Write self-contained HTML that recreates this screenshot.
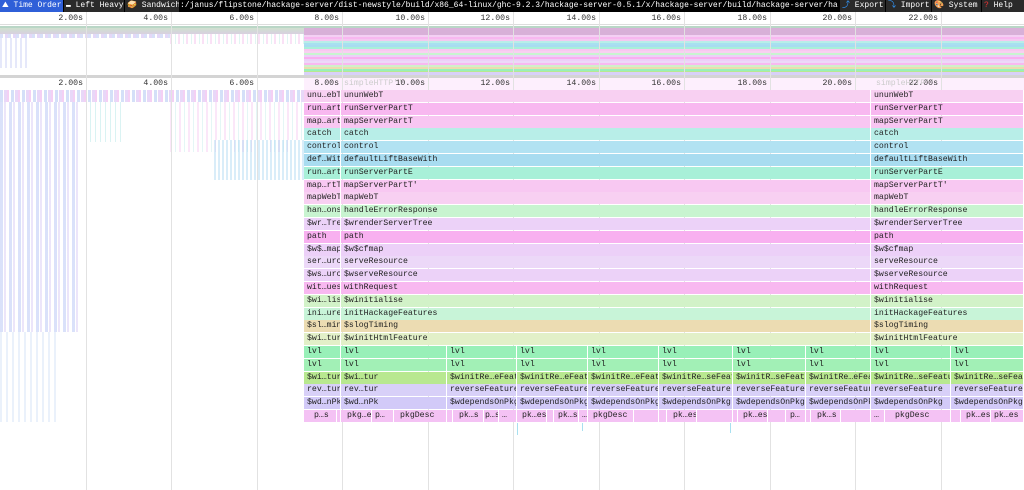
<!DOCTYPE html>
<html><head><meta charset="utf-8"><style>
*{margin:0;padding:0;box-sizing:border-box}
body{width:1024px;height:490px;background:#fff;position:relative;overflow:hidden;font-family:"Liberation Mono","DejaVu Sans Mono",monospace;font-size:8.2px;color:#222}
.a{position:absolute}
.top{left:0;top:0;width:1024px;height:12px;background:#000;color:#fff;font-size:8px;line-height:12px;white-space:nowrap;overflow:hidden}
.btn{position:absolute;top:0;height:12px;background:#2a2a2a;padding-left:2px;color:#fff;overflow:hidden;white-space:nowrap}
.g{position:absolute;width:1px;background:#e2e2e2}
.lab{position:absolute;font-size:8.2px;line-height:12px;color:#333;text-align:right;width:60px}
.s{position:absolute;height:12px;line-height:12px;padding-left:3px;overflow:hidden;white-space:nowrap;border-right:1px solid #fff;color:#222}
</style></head><body>
<div class="a top">
<div class="btn" style="left:0;width:63px;background:#2f5fd8">⛰ Time Order</div>
<div class="btn" style="left:64px;width:60px">▬ Left Heavy</div>
<div class="btn" style="left:125px;width:54px">🥪 Sandwich</div>
<div class="a" style="left:180px;top:0;width:658px;overflow:hidden">:/janus/flipstone/hackage-server/dist-newstyle/build/x86_64-linux/ghc-9.2.3/hackage-server-0.5.1/x/hackage-server/build/hackage-server/hackage-s</div>
<div class="btn" style="left:840px;width:45px"><span style="color:#39f">⤴</span> Export</div>
<div class="btn" style="left:886px;width:45px"><span style="color:#39f">⤵</span> Import</div>
<div class="btn" style="left:932px;width:49px">🎨 System</div>
<div class="btn" style="left:982px;width:42px"><span style="color:#e33">?</span> Help</div>
</div>
<!-- minimap -->
<div class="a" style="left:0;top:12px;width:1024px;height:13px;background:#fff;border-bottom:1px solid #ddd"></div>
<div class="a" style="left:0;top:26px;width:1024px;height:2px;background:#b9d6c6"></div>
<div class="a" style="left:0;top:28px;width:304px;height:6px;background:linear-gradient(#cfe0cf,#d8d0e0)"></div>
<div class="a" style="left:0;top:34px;width:170px;height:4px;background:repeating-linear-gradient(90deg,#d8e0f8 0 3px,#fff 3px 5px,#e4d8f8 5px 8px)"></div>
<div class="a" style="left:0;top:38px;width:30px;height:30px;background:repeating-linear-gradient(90deg,rgba(170,180,240,.3) 0 2px,#fff 2px 5px)"></div>
<div class="a" style="left:170px;top:34px;width:134px;height:10px;background:repeating-linear-gradient(90deg,rgba(240,170,230,.35) 0 2px,#fff 2px 5px,rgba(170,230,220,.35) 5px 6px,#fff 6px 8px)"></div>
<div class="a" style="left:304px;top:28px;width:720px;height:47px;background:linear-gradient(#d8b0d8 0 7px,#f4d0f4 7px 9px,#f8b8f0 9px 11px,#f4c8f0 11px 13px,#b8eee8 13px 15px,#a8e0f0 15px 17px,#a8dcf0 17px 19px,#a8f0d8 19px 21px,#f8c8f0 21px 23px,#f8d0f0 23px 25px,#c8f4d0 25px 27px,#ecd0f8 27px 29px,#f8b0f0 29px 31px,#ecd0f8 31px 33px,#ecd8f8 33px 35px,#f8b8f0 35px 37px,#d0f0c8 37px 39px,#ecdcb0 39px 41px,#98f0b8 41px 43px,#b8e890 43px 44px,#d8d0f8 44px 47px)"></div>
<div class="a" style="left:0;top:75px;width:1024px;height:3px;background:#d4d4d4"></div>
<!-- main ruler bg -->
<div class="a" style="left:304px;top:78px;width:720px;height:12px;background:#fdeffd"></div>
<div class="a" style="left:0;top:90px;width:304px;height:12px;background:repeating-linear-gradient(90deg,#d4e0f8 0 3px,#fff 3px 4px,#e8d8f8 4px 7px,#f4d0f4 7px 9px,#fff 9px 11px)"></div>
<div class="a" style="left:0;top:102px;width:80px;height:230px;background:repeating-linear-gradient(90deg,rgba(150,170,240,.35) 0 3px,#fff 3px 4px,rgba(190,170,240,.3) 4px 6px,#fff 6px 9px)"></div>
<div class="a" style="left:0;top:332px;width:60px;height:90px;background:repeating-linear-gradient(90deg,rgba(170,200,240,.25) 0 2px,#fff 2px 6px)"></div>
<div class="a" style="left:90px;top:102px;width:35px;height:40px;background:repeating-linear-gradient(90deg,rgba(150,220,220,.35) 0 1px,#fff 1px 5px)"></div>
<div class="a" style="left:170px;top:102px;width:134px;height:50px;background:repeating-linear-gradient(90deg,rgba(240,160,230,.25) 0 2px,#fff 2px 5px,rgba(150,220,220,.25) 5px 6px,#fff 6px 9px)"></div>
<div class="a" style="left:214px;top:140px;width:90px;height:40px;background:repeating-linear-gradient(90deg,rgba(160,210,240,.4) 0 2px,#fff 2px 4px)"></div>
<!-- grid lines -->
<div class="g" style="left:86px;top:12px;height:478px"></div>
<div class="g" style="left:171px;top:12px;height:478px"></div>
<div class="g" style="left:257px;top:12px;height:478px"></div>
<div class="g" style="left:342px;top:12px;height:478px"></div>
<div class="g" style="left:428px;top:12px;height:478px"></div>
<div class="g" style="left:513px;top:12px;height:478px"></div>
<div class="g" style="left:599px;top:12px;height:478px"></div>
<div class="g" style="left:684px;top:12px;height:478px"></div>
<div class="g" style="left:770px;top:12px;height:478px"></div>
<div class="g" style="left:855px;top:12px;height:478px"></div>
<div class="g" style="left:941px;top:12px;height:478px"></div>
<!-- ruler labels -->
<div class="lab" style="left:23px;top:13px">2.00s</div><div class="lab" style="left:108px;top:13px">4.00s</div><div class="lab" style="left:194px;top:13px">6.00s</div><div class="lab" style="left:279px;top:13px">8.00s</div><div class="lab" style="left:365px;top:13px">10.00s</div><div class="lab" style="left:450px;top:13px">12.00s</div><div class="lab" style="left:536px;top:13px">14.00s</div><div class="lab" style="left:621px;top:13px">16.00s</div><div class="lab" style="left:707px;top:13px">18.00s</div><div class="lab" style="left:792px;top:13px">20.00s</div><div class="lab" style="left:878px;top:13px">22.00s</div>
<div class="lab" style="left:23px;top:78px">2.00s</div><div class="lab" style="left:108px;top:78px">4.00s</div><div class="lab" style="left:194px;top:78px">6.00s</div><div class="lab" style="left:279px;top:78px">8.00s</div><div class="lab" style="left:365px;top:78px">10.00s</div><div class="lab" style="left:450px;top:78px">12.00s</div><div class="lab" style="left:536px;top:78px">14.00s</div><div class="lab" style="left:621px;top:78px">16.00s</div><div class="lab" style="left:707px;top:78px">18.00s</div><div class="lab" style="left:792px;top:78px">20.00s</div><div class="lab" style="left:878px;top:78px">22.00s</div>
<div class="a" style="left:344px;top:78px;line-height:12px;color:#ccc">simpleHTTP''</div>
<div class="a" style="left:876px;top:78px;line-height:12px;color:#ccc">simpleHTTP''</div>

<!-- rows 0-19 -->
<div class="s" style="top:90px;left:304px;width:37px;background:#f8d0f2">unu…ebT</div><div class="s" style="top:90px;left:341px;width:530px;background:#f8d0f2">ununWebT</div><div class="s" style="top:90px;left:871px;width:153px;background:#f8d0f2">ununWebT</div>
<div class="s" style="top:103px;left:304px;width:37px;background:#f8b8f0">run…art</div><div class="s" style="top:103px;left:341px;width:530px;background:#f8b8f0">runServerPartT</div><div class="s" style="top:103px;left:871px;width:153px;background:#f8b8f0">runServerPartT</div>
<div class="s" style="top:116px;left:304px;width:37px;background:#f8c6f2">map…art</div><div class="s" style="top:116px;left:341px;width:530px;background:#f8c6f2">mapServerPartT</div><div class="s" style="top:116px;left:871px;width:153px;background:#f8c6f2">mapServerPartT</div>
<div class="s" style="top:128px;left:304px;width:37px;background:#b8eee8">catch</div><div class="s" style="top:128px;left:341px;width:530px;background:#b8eee8">catch</div><div class="s" style="top:128px;left:871px;width:153px;background:#b8eee8">catch</div>
<div class="s" style="top:141px;left:304px;width:37px;background:#b2e2f2">control</div><div class="s" style="top:141px;left:341px;width:530px;background:#b2e2f2">control</div><div class="s" style="top:141px;left:871px;width:153px;background:#b2e2f2">control</div>
<div class="s" style="top:154px;left:304px;width:37px;background:#a8dcf0">def…Wit</div><div class="s" style="top:154px;left:341px;width:530px;background:#a8dcf0">defaultLiftBaseWith</div><div class="s" style="top:154px;left:871px;width:153px;background:#a8dcf0">defaultLiftBaseWith</div>
<div class="s" style="top:167px;left:304px;width:37px;background:#a8f0d8">run…art</div><div class="s" style="top:167px;left:341px;width:530px;background:#a8f0d8">runServerPartE</div><div class="s" style="top:167px;left:871px;width:153px;background:#a8f0d8">runServerPartE</div>
<div class="s" style="top:180px;left:304px;width:37px;background:#f8c8f2">map…rtT</div><div class="s" style="top:180px;left:341px;width:530px;background:#f8c8f2">mapServerPartT'</div><div class="s" style="top:180px;left:871px;width:153px;background:#f8c8f2">mapServerPartT'</div>
<div class="s" style="top:192px;left:304px;width:37px;background:#f8d0f2">mapWebT</div><div class="s" style="top:192px;left:341px;width:530px;background:#f8d0f2">mapWebT</div><div class="s" style="top:192px;left:871px;width:153px;background:#f8d0f2">mapWebT</div>
<div class="s" style="top:205px;left:304px;width:37px;background:#c8f4d0">han…ons</div><div class="s" style="top:205px;left:341px;width:530px;background:#c8f4d0">handleErrorResponse</div><div class="s" style="top:205px;left:871px;width:153px;background:#c8f4d0">handleErrorResponse</div>
<div class="s" style="top:218px;left:304px;width:37px;background:#ecd2f8">$wr…Tre</div><div class="s" style="top:218px;left:341px;width:530px;background:#ecd2f8">$wrenderServerTree</div><div class="s" style="top:218px;left:871px;width:153px;background:#ecd2f8">$wrenderServerTree</div>
<div class="s" style="top:231px;left:304px;width:37px;background:#f8b0f0">path</div><div class="s" style="top:231px;left:341px;width:530px;background:#f8b0f0">path</div><div class="s" style="top:231px;left:871px;width:153px;background:#f8b0f0">path</div>
<div class="s" style="top:244px;left:304px;width:37px;background:#ecd0f8">$w$…map</div><div class="s" style="top:244px;left:341px;width:530px;background:#ecd0f8">$w$cfmap</div><div class="s" style="top:244px;left:871px;width:153px;background:#ecd0f8">$w$cfmap</div>
<div class="s" style="top:256px;left:304px;width:37px;background:#ecd8f8">ser…urc</div><div class="s" style="top:256px;left:341px;width:530px;background:#ecd8f8">serveResource</div><div class="s" style="top:256px;left:871px;width:153px;background:#ecd8f8">serveResource</div>
<div class="s" style="top:269px;left:304px;width:37px;background:#ecd2f8">$ws…urc</div><div class="s" style="top:269px;left:341px;width:530px;background:#ecd2f8">$wserveResource</div><div class="s" style="top:269px;left:871px;width:153px;background:#ecd2f8">$wserveResource</div>
<div class="s" style="top:282px;left:304px;width:37px;background:#f8b8f0">wit…ues</div><div class="s" style="top:282px;left:341px;width:530px;background:#f8b8f0">withRequest</div><div class="s" style="top:282px;left:871px;width:153px;background:#f8b8f0">withRequest</div>
<div class="s" style="top:295px;left:304px;width:37px;background:#d2f2c8">$wi…lis</div><div class="s" style="top:295px;left:341px;width:530px;background:#d2f2c8">$winitialise</div><div class="s" style="top:295px;left:871px;width:153px;background:#d2f2c8">$winitialise</div>
<div class="s" style="top:308px;left:304px;width:37px;background:#c8f4d8">ini…ure</div><div class="s" style="top:308px;left:341px;width:530px;background:#c8f4d8">initHackageFeatures</div><div class="s" style="top:308px;left:871px;width:153px;background:#c8f4d8">initHackageFeatures</div>
<div class="s" style="top:320px;left:304px;width:37px;background:#ecdcb2">$sl…min</div><div class="s" style="top:320px;left:341px;width:530px;background:#ecdcb2">$slogTiming</div><div class="s" style="top:320px;left:871px;width:153px;background:#ecdcb2">$slogTiming</div>
<div class="s" style="top:333px;left:304px;width:37px;background:#e2f0c8">$wi…tur</div><div class="s" style="top:333px;left:341px;width:530px;background:#e2f0c8">$winitHtmlFeature</div><div class="s" style="top:333px;left:871px;width:153px;background:#e2f0c8">$winitHtmlFeature</div>
<!-- rows 20-24 -->
<div class="s" style="top:346px;left:304px;width:37px;background:#98f0b8">lvl</div><div class="s" style="top:346px;left:341px;width:106px;background:#98f0b8">lvl</div><div class="s" style="top:346px;left:447px;width:70px;background:#98f0b8">lvl</div><div class="s" style="top:346px;left:517px;width:71px;background:#98f0b8">lvl</div><div class="s" style="top:346px;left:588px;width:71px;background:#98f0b8">lvl</div><div class="s" style="top:346px;left:659px;width:74px;background:#98f0b8">lvl</div><div class="s" style="top:346px;left:733px;width:73px;background:#98f0b8">lvl</div><div class="s" style="top:346px;left:806px;width:65px;background:#98f0b8">lvl</div><div class="s" style="top:346px;left:871px;width:80px;background:#98f0b8">lvl</div><div class="s" style="top:346px;left:951px;width:73px;background:#98f0b8">lvl</div>
<div class="s" style="top:359px;left:304px;width:37px;background:#a2f0b6">lvl</div><div class="s" style="top:359px;left:341px;width:106px;background:#a2f0b6">lvl</div><div class="s" style="top:359px;left:447px;width:70px;background:#a2f0b6">lvl</div><div class="s" style="top:359px;left:517px;width:71px;background:#a2f0b6">lvl</div><div class="s" style="top:359px;left:588px;width:71px;background:#a2f0b6">lvl</div><div class="s" style="top:359px;left:659px;width:74px;background:#a2f0b6">lvl</div><div class="s" style="top:359px;left:733px;width:73px;background:#a2f0b6">lvl</div><div class="s" style="top:359px;left:806px;width:65px;background:#a2f0b6">lvl</div><div class="s" style="top:359px;left:871px;width:80px;background:#a2f0b6">lvl</div><div class="s" style="top:359px;left:951px;width:73px;background:#a2f0b6">lvl</div>
<div class="s" style="top:372px;left:304px;width:37px;background:#b8e890">$wi…tur</div><div class="s" style="top:372px;left:341px;width:106px;background:#b8e890">$wi…tur</div><div class="s" style="top:372px;left:447px;width:70px;background:#b8e890">$winitRe…eFeatur</div><div class="s" style="top:372px;left:517px;width:71px;background:#b8e890">$winitRe…eFeatur</div><div class="s" style="top:372px;left:588px;width:71px;background:#b8e890">$winitRe…eFeatur</div><div class="s" style="top:372px;left:659px;width:74px;background:#b8e890">$winitRe…seFeature</div><div class="s" style="top:372px;left:733px;width:73px;background:#b8e890">$winitR…seFeature</div><div class="s" style="top:372px;left:806px;width:65px;background:#b8e890">$winitRe…eFeatur</div><div class="s" style="top:372px;left:871px;width:80px;background:#b8e890">$winitRe…seFeature</div><div class="s" style="top:372px;left:951px;width:73px;background:#b8e890">$winitRe…seFeature</div>
<div class="s" style="top:384px;left:304px;width:37px;background:#d8d0f8">rev…tur</div><div class="s" style="top:384px;left:341px;width:106px;background:#d8d0f8">rev…tur</div><div class="s" style="top:384px;left:447px;width:70px;background:#d8d0f8">reverseFeature</div><div class="s" style="top:384px;left:517px;width:71px;background:#d8d0f8">reverseFeature</div><div class="s" style="top:384px;left:588px;width:71px;background:#d8d0f8">reverseFeature</div><div class="s" style="top:384px;left:659px;width:74px;background:#d8d0f8">reverseFeature</div><div class="s" style="top:384px;left:733px;width:73px;background:#d8d0f8">reverseFeature</div><div class="s" style="top:384px;left:806px;width:65px;background:#d8d0f8">reverseFeature</div><div class="s" style="top:384px;left:871px;width:80px;background:#d8d0f8">reverseFeature</div><div class="s" style="top:384px;left:951px;width:73px;background:#d8d0f8">reverseFeature</div>
<div class="s" style="top:397px;left:304px;width:37px;background:#d2caf8">$wd…nPk</div><div class="s" style="top:397px;left:341px;width:106px;background:#d2caf8">$wd…nPk</div><div class="s" style="top:397px;left:447px;width:70px;background:#d2caf8">$wdependsOnPkg</div><div class="s" style="top:397px;left:517px;width:71px;background:#d2caf8">$wdependsOnPkg</div><div class="s" style="top:397px;left:588px;width:71px;background:#d2caf8">$wdependsOnPkg</div><div class="s" style="top:397px;left:659px;width:74px;background:#d2caf8">$wdependsOnPkg</div><div class="s" style="top:397px;left:733px;width:73px;background:#d2caf8">$wdependsOnPkg</div><div class="s" style="top:397px;left:806px;width:65px;background:#d2caf8">$wdependsOnPkg</div><div class="s" style="top:397px;left:871px;width:80px;background:#d2caf8">$wdependsOnPkg</div><div class="s" style="top:397px;left:951px;width:73px;background:#d2caf8">$wdependsOnPkg</div>
<!-- row 25 pk -->
<div class="s" style="top:410px;left:304px;width:33px;background:#f4c2f4;padding-left:10px">p…s</div><div class="s" style="top:410px;left:337px;width:4px;background:#f4c2f4"></div>
<div class="s" style="top:410px;left:341px;width:31px;background:#f4c2f4;padding-left:6px">pkg…es</div><div class="s" style="top:410px;left:372px;width:22px;background:#f4c2f4">p…</div><div class="s" style="top:410px;left:394px;width:53px;background:#f4c2f4;padding-left:6px">pkgDesc</div>
<div class="s" style="top:410px;left:447px;width:6px;background:#f4c2f4"></div><div class="s" style="top:410px;left:453px;width:31px;background:#f4c2f4;padding-left:6px">pk…s</div><div class="s" style="top:410px;left:484px;width:15px;background:#f4c2f4;padding-left:1px">p…s</div><div class="s" style="top:410px;left:499px;width:18px;background:#f4c2f4">…</div>
<div class="s" style="top:410px;left:517px;width:30px;background:#f4c2f4;padding-left:5px">pk…es</div><div class="s" style="top:410px;left:547px;width:7px;background:#f4c2f4"></div><div class="s" style="top:410px;left:554px;width:25px;background:#f4c2f4;padding-left:4px">pk…s</div><div class="s" style="top:410px;left:579px;width:9px;background:#f4c2f4">…</div>
<div class="s" style="top:410px;left:588px;width:46px;background:#f4c2f4;padding-left:5px">pkgDesc</div><div class="s" style="top:410px;left:634px;width:25px;background:#f4c2f4"></div>
<div class="s" style="top:410px;left:659px;width:8px;background:#f4c2f4"></div><div class="s" style="top:410px;left:667px;width:30px;background:#f4c2f4;padding-left:6px">pk…es</div><div class="s" style="top:410px;left:697px;width:36px;background:#f4c2f4"></div>
<div class="s" style="top:410px;left:733px;width:5px;background:#f4c2f4"></div><div class="s" style="top:410px;left:738px;width:30px;background:#f4c2f4;padding-left:5px">pk…es</div><div class="s" style="top:410px;left:768px;width:18px;background:#f4c2f4"></div><div class="s" style="top:410px;left:786px;width:20px;background:#f4c2f4;padding-left:4px">p…</div>
<div class="s" style="top:410px;left:806px;width:5px;background:#f4c2f4"></div><div class="s" style="top:410px;left:811px;width:30px;background:#f4c2f4;padding-left:6px">pk…s</div><div class="s" style="top:410px;left:841px;width:30px;background:#f4c2f4"></div>
<div class="s" style="top:410px;left:871px;width:14px;background:#f4c2f4;padding-left:3px">…</div><div class="s" style="top:410px;left:885px;width:66px;background:#f4c2f4;padding-left:10px">pkgDesc</div>
<div class="s" style="top:410px;left:951px;width:10px;background:#f4c2f4"></div><div class="s" style="top:410px;left:961px;width:30px;background:#f4c2f4;padding-left:5px">pk…es</div><div class="s" style="top:410px;left:991px;width:33px;background:#f4c2f4;padding-left:3px">pk…es</div>
<div class="a" style="left:517px;top:423px;width:1px;height:12px;background:#a8e0f0"></div>
<div class="a" style="left:582px;top:423px;width:1px;height:8px;background:#a8e0f0"></div>
<div class="a" style="left:730px;top:423px;width:1px;height:10px;background:#a8e0f0"></div>
</body></html>
